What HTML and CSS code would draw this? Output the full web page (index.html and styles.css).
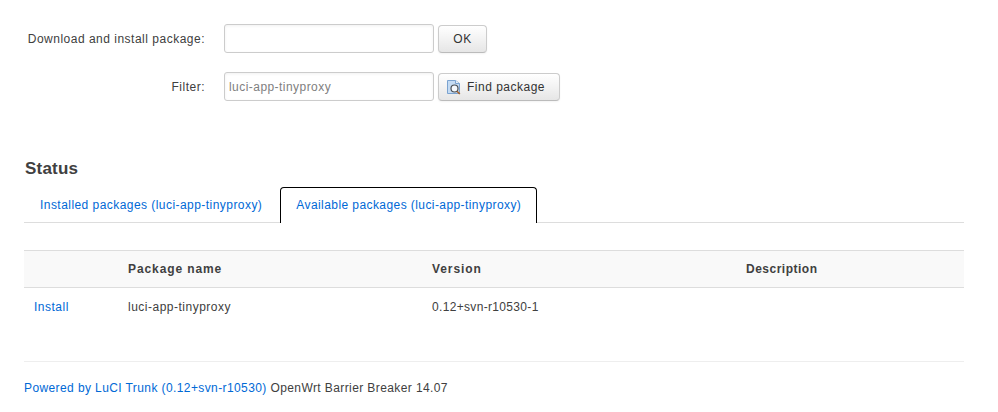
FILE: index.html
```html
<!DOCTYPE html>
<html lang="en">
<head>
<meta charset="utf-8">
<title>Software</title>
<link rel="stylesheet" href="styles.css">
</head>
<body>
<main class="container">
  <form class="actions">
    <div class="field">
      <label class="field-label">Download and install package:</label>
      <input class="text-input" type="text">
      <button class="btn btn-ok" type="button">OK</button>
    </div>
    <div class="field">
      <label class="field-label">Filter:</label>
      <input class="text-input" type="text" value="luci-app-tinyproxy">
      <button class="btn btn-find" type="button">
        <svg class="find-icon" width="16" height="16" viewBox="0 0 16 16" aria-hidden="true">
          <path d="M1.5 1.5h8l4 3v10h-12z" fill="#c4dbf3" stroke="#7ba3d0"/>
          <path d="M9.5 1.5v3h4" fill="#e8f1fa" stroke="#7ba3d0"/>
          <circle cx="8.5" cy="9.5" r="3.5" fill="#f4f8fc" stroke="#4a4f55" stroke-width="1.2"/>
          <path d="M11 12.2l2.8 2.8" stroke="#a5622a" stroke-width="1.6"/>
        </svg>
        Find package
      </button>
    </div>
  </form>

  <h2 class="section-title">Status</h2>
  <ul class="tabs">
    <li class="tab"><a href="#">Installed packages (luci-app-tinyproxy)</a></li>
    <li class="tab tab-active"><a href="#">Available packages (luci-app-tinyproxy)</a></li>
  </ul>

  <table class="packages">
    <colgroup><col class="col-action"><col class="col-name"><col class="col-version"><col></colgroup>
    <thead>
      <tr><th></th><th class="th-wide">Package name</th><th class="th-wide">Version</th><th>Description</th></tr>
    </thead>
    <tbody>
      <tr><td><a href="#">Install</a></td><td>luci-app-tinyproxy</td><td class="td-version">0.12+svn-r10530-1</td><td></td></tr>
    </tbody>
  </table>

  <footer class="footer"><a href="#">Powered by LuCI Trunk (0.12+svn-r10530)</a> OpenWrt Barrier Breaker 14.07</footer>
</main>
</body>
</html>
```
FILE: styles.css
```css
* { box-sizing: border-box; }
html, body { margin: 0; padding: 0; background: #fff; }
body {
  font-family: "Liberation Sans", Arial, sans-serif;
  font-size: 12px;
  letter-spacing: 0.5px;
  line-height: 18px;
  color: #404040;
}
a { color: #0069d6; text-decoration: none; }
.container { width: 940px; margin-left: 24px; padding-top: 24px; }
.actions { display: flex; flex-direction: column; gap: 19px; }
.field { display: flex; align-items: center; height: 29px; }
.field-label { width: 181px; text-align: right; margin-right: 19px; }
.text-input {
  width: 210px; height: 29px; padding: 4px; margin: 0 4px 0 0;
  border: 1px solid #ccc; border-radius: 3px; background: #fff;
  font: inherit; letter-spacing: .45px; color: #808080;
  box-shadow: inset 0 1px 3px rgba(0,0,0,.06);
}
.btn {
  display: inline-flex; align-items: center; height: 28px; padding: 0 14px;
  border: 1px solid #ccc; border-bottom-color: #bbb; border-radius: 4px;
  background: linear-gradient(#fff, #e6e6e6 100%);
  box-shadow: 0 1px 2px rgba(0,0,0,.05);
  font: inherit; letter-spacing: .5px; color: #333; margin: 1px 0 0;
}
.btn-ok { width: 49px; justify-content: center; padding: 0; }
.btn-find { width: 122px; padding: 0 0 0 7px; gap: 5px; }
.find-icon { flex: none; }
.section-title { margin: 58px 0 0 1px; font-size: 17px; line-height: 20px; font-weight: bold; letter-spacing: .2px; color: #404040; }
.tabs { display: flex; margin: 8px 0 0; padding: 0; list-style: none; height: 36px; border-bottom: 1px solid #ddd; letter-spacing: .45px; }
.tab { height: 36px; padding: 8px 15px 0; margin-right: 2px; border: 1px solid transparent; border-bottom: 0; border-radius: 4px 4px 0 0; }
.tab-active { border-color: #000; background: #fff; letter-spacing: .42px; }
.packages { width: 100%; margin-top: 27px; border-collapse: collapse; table-layout: fixed; }
.col-action { width: 94px; }
.col-name { width: 304px; }
.col-version { width: 314px; }
.packages th, .packages td { text-align: left; padding: 0 10px; }
.packages th { height: 37px; background: #f9f9f9; border-top: 1px solid #ddd; border-bottom: 1px solid #ddd; font-weight: bold; }
.packages th.th-wide { letter-spacing: .9px; }
.packages td { height: 38px; }
.packages td.td-version { letter-spacing: .33px; }
.footer { margin-top: 35px; padding-top: 17px; border-top: 1px solid #eee; letter-spacing: .4px; }
```
